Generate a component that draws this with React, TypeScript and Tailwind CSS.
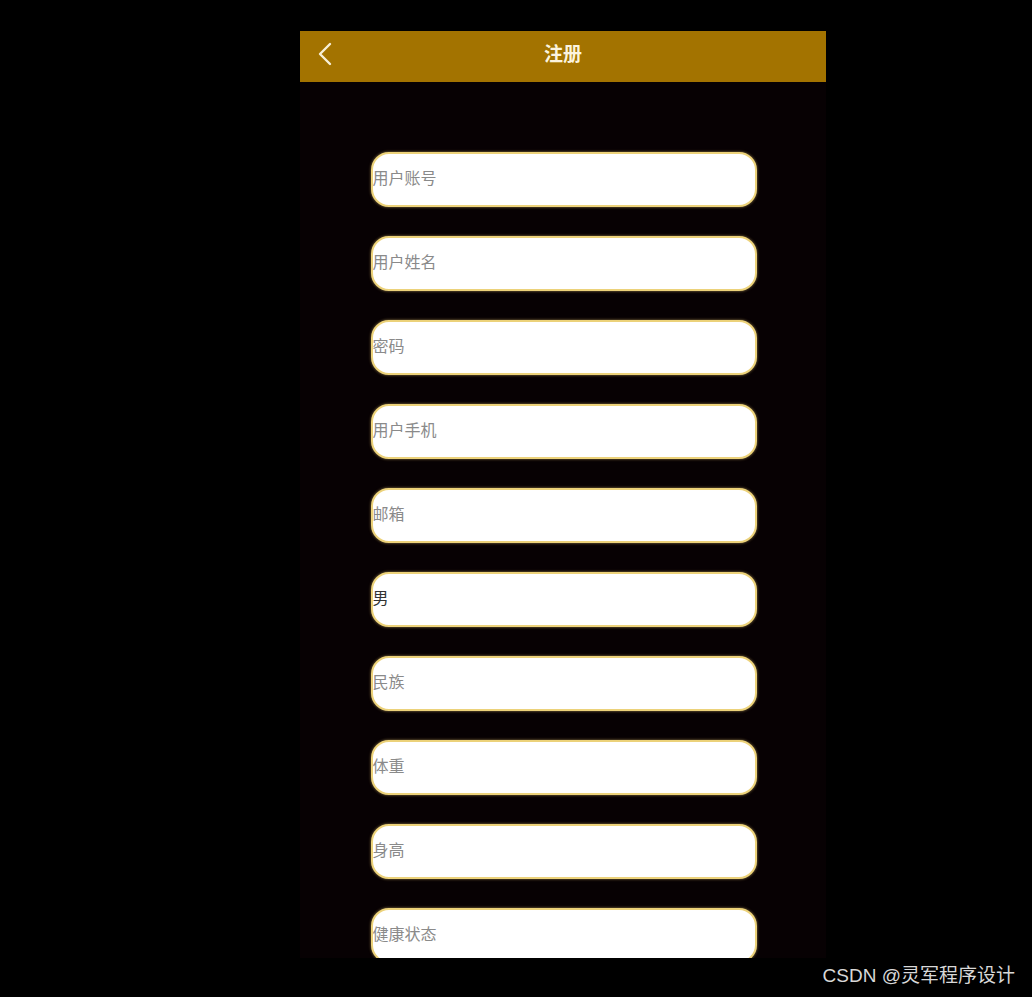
import React from "react";

const fields = [
  { label: "用户账号" },
  { label: "用户姓名" },
  { label: "密码" },
  { label: "用户手机" },
  { label: "邮箱" },
  { label: "男", value: true },
  { label: "民族" },
  { label: "体重" },
  { label: "身高" },
  { label: "健康状态" },
];

const App = () => {
  return (
    <div
      className="relative w-[1032px] h-[997px] bg-black overflow-hidden"
      style={{ fontFamily: '"Liberation Sans", "Noto Sans CJK SC", sans-serif' }}
    >
      <div className="ml-[300px] pt-[31px] w-[526px]">
        <div className="relative h-[51px] bg-[#a37300] flex items-center justify-center">
          <svg
            className="absolute left-[17px] top-[11px]"
            width="16"
            height="24"
            viewBox="0 0 16 24"
            fill="none"
            stroke="#f7efd8"
            strokeWidth="2.4"
            strokeLinecap="round"
            strokeLinejoin="round"
          >
            <path d="M13 2 L3 12 L13 22" />
          </svg>
          <span className="text-[19px] font-bold text-[#fbf3df] pb-[2px]">注册</span>
        </div>
        <div className="h-[876px] bg-[#070103] overflow-hidden pt-[70px] flex flex-col items-center gap-[29px]">
          {fields.map((f) => (
            <div
              key={f.label}
              className="shrink-0 w-[386px] h-[55px] ml-[1px] rounded-[18px] border-2 border-[#ecd27a] bg-white flex items-center pb-[2px] shadow-[0_0_3px_rgba(240,210,120,0.6)]"
            >
              <span
                className={`text-[16px] ${f.value ? "text-[#333]" : "text-[#8a8a8a]"}`}
              >
                {f.label}
              </span>
            </div>
          ))}
        </div>
      </div>
      <div className="absolute right-[17px] top-[962px] text-[19px] text-[#d8d8d8]">
        CSDN @灵军程序设计
      </div>
    </div>
  );
};

export default App;
